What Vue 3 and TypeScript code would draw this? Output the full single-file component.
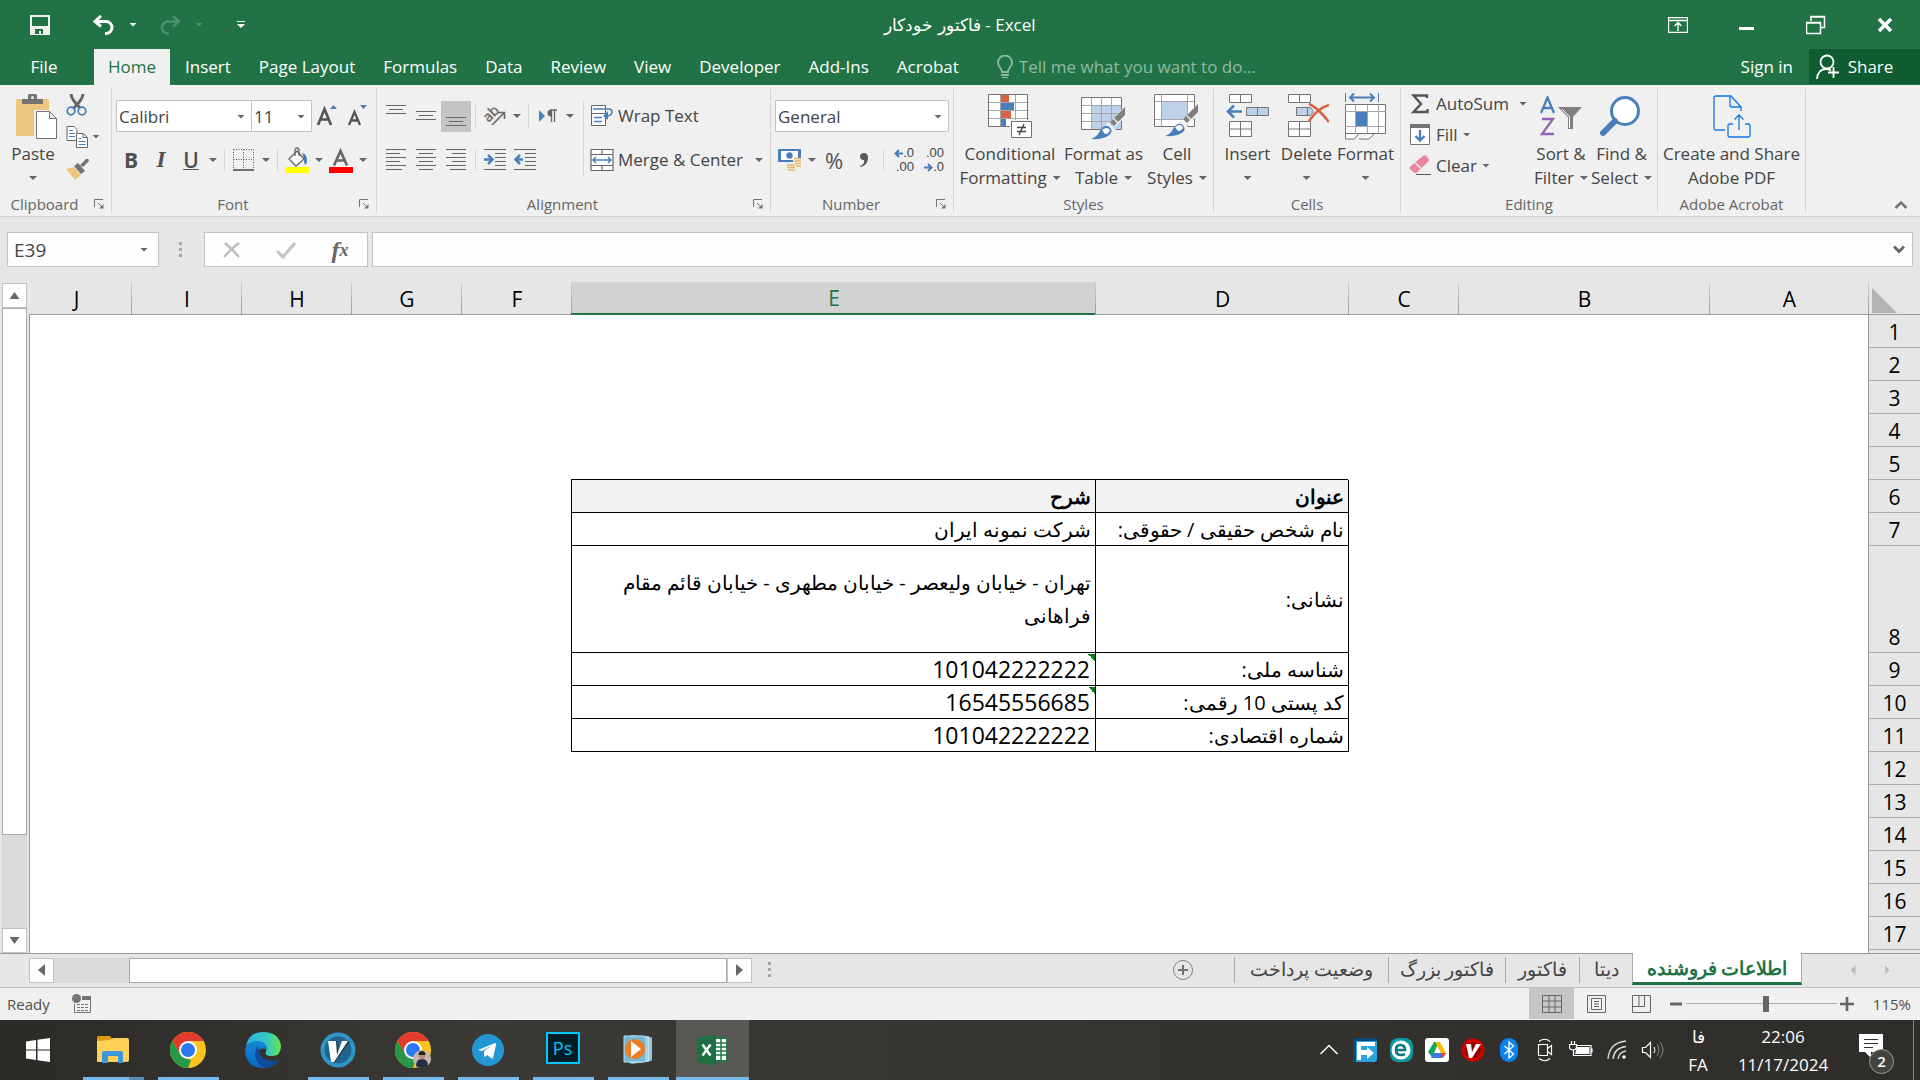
<script setup lang="ts">
import { ref } from 'vue'

interface Column { name: string; width?: number }
interface SheetRow { n: number; title?: string; value?: string; head?: boolean; tall?: boolean; flag?: boolean; numeric?: boolean }

const tabs = ['Insert', 'Page Layout', 'Formulas', 'Data', 'Review', 'View', 'Developer', 'Add-Ins', 'Acrobat']

const columns: Column[] = [
  { name: 'A', width: 159 }, { name: 'B', width: 251 }, { name: 'C', width: 110 },
  { name: 'D', width: 253 }, { name: 'E', width: 524 }, { name: 'F', width: 110 },
  { name: 'G', width: 110 }, { name: 'H', width: 110 }, { name: 'I', width: 110 }, { name: 'J' },
]

const filled: Record<number, Omit<SheetRow, 'n'>> = {
  6: { title: 'عنوان', value: 'شرح', head: true },
  7: { title: 'نام شخص حقیقی / حقوقی:', value: 'شرکت نمونه ایران' },
  8: { title: 'نشانی:', value: 'تهران - خیابان ولیعصر - خیابان مطهری - خیابان قائم مقام فراهانی', tall: true },
  9: { title: 'شناسه ملی:', value: '101042222222', flag: true, numeric: true },
  10: { title: 'کد پستی 10 رقمی:', value: '16545556685', flag: true, numeric: true },
  11: { title: 'شماره اقتصادی:', value: '101042222222', numeric: true },
}
const rows: SheetRow[] = Array.from({ length: 17 }, (_, i) => ({ n: i + 1, ...(filled[i + 1] ?? {}) }))

const sheets = ['دیتا', 'فاکتور', 'فاکتور بزرگ', 'وضعیت پرداخت']
const zoom = ref(53)
</script>

<template>
  <div class="window">
    <header class="titlebar">
      <div class="quick">
        <button aria-label="Save"><svg width="20" height="20" viewBox="0 0 20 20"><path d="M1 1h18v18H1z" fill="none" stroke="#f0f0f0" stroke-width="2"/><path d="M1 11h18v8H1z" fill="#f0f0f0"/><path d="M5 14h8v5h-2v-3H9v3H5z" fill="#217346"/></svg></button>
        <button class="undo" aria-label="Undo"><svg width="22" height="20" viewBox="0 0 22 20"><path d="M8 1L2 6.500l6 5M3 6.500h10a6 6 0 0 1 0 12h-1" fill="none" stroke="#fff" stroke-width="3"/></svg></button>
        <span class="caret white"></span>
        <button class="redo" aria-label="Redo"><svg width="22" height="20" viewBox="0 0 22 20"><path d="M14 1l6 5.500-6 5M19 6.500H9a6 6 0 0 0 0 12h1" fill="none" stroke="#4d9070" stroke-width="2.500"/></svg></button>
        <span class="caret dim"></span>
        <button class="customize" aria-label="Customize Quick Access Toolbar"><svg width="8" height="8" viewBox="0 0 8 8"><path d="M0 0h8v1H0zM0 3h8L4 7z" fill="#fff"/></svg></button>
      </div>
      <h1 class="doc">فاکتور خودکار - Excel</h1>
      <div class="winbtns">
        <button aria-label="Ribbon Display Options"><svg width="20" height="16" viewBox="0 0 20 16"><path d="M.5.5h19v15H.5zM.5 3.500h19M10 14V6M6.500 9L10 5.500 13.500 9" fill="none" stroke="#fff" stroke-width="1.300"/></svg></button>
        <button aria-label="Minimize"><svg width="16" height="16" viewBox="0 0 16 16"><path d="M0 10h15v3H0z" fill="#fff"/></svg></button>
        <button aria-label="Restore"><svg width="20" height="20" viewBox="0 0 20 20"><path d="M5 6V1.500h13.500v11H15M5 2h13.500M.5 7.500h14v11H.5zM.5 8h14" fill="none" stroke="#fff" stroke-width="1.500"/></svg></button>
        <button aria-label="Close"><svg width="16" height="16" viewBox="0 0 16 16"><path d="M2 2l12 12M14 2L2 14" stroke="#fff" stroke-width="3.500"/></svg></button>
      </div>
    </header>

    <nav class="tabs">
      <button class="tab file">File</button>
      <button class="tab active">Home</button>
      <button v-for="t in tabs" :key="t" class="tab">{{ t }}</button>
      <label class="tell">
        <svg width="16" height="24" viewBox="0 0 16 24"><path d="M5 17c0-4-4-5-4-9.500a7 7 0 0 1 14 0C15 12 11 13 11 17z" fill="none" stroke="#90b9a2" stroke-width="1.800"/><path d="M4 19h8v2H4zM5 22h6v1H5z" fill="#90b9a2"/></svg>
        <input type="text" placeholder="Tell me what you want to do..." />
      </label>
      <button class="tab signin">Sign in</button>
      <button class="share">
        <svg width="24" height="26" viewBox="0 0 24 26"><circle cx="11" cy="8" r="6.500" fill="none" stroke="#fff" stroke-width="1.800"/><path d="M1 25c0-6 4-10 9-10 2 0 4 .5 5 1.500M17.500 13v11M12 18.500h11" fill="none" stroke="#fff" stroke-width="1.800"/></svg>
        Share
      </button>
    </nav>

    <section class="ribbon">
      <div class="group g-clip">
        <div class="body">
          <button class="big paste">
            <span class="pic"><svg width="42" height="46" viewBox="0 0 42 46"><rect x="0" y="5" width="33" height="37" rx="1.500" fill="#ecc77d"/><path d="M6 10V5h6V1.500Q12 0 13.500 0h6Q21 0 21 1.500V5h6v5z" fill="#737373"/><circle cx="16.500" cy="3.500" r="1.500" fill="#f0f0f0"/><path d="M18 16h17l8 8v22H18z" fill="#f0f0f0"/><path d="M20.500 17.500h13l7 7v20h-20zM33.500 17.500v7h7" fill="#fff" stroke="#737373"/></svg></span>
            <span>Paste</span><span class="line2"><i class="caret"></i></span>
          </button>
          <div class="clipcol">
            <button class="sq" aria-label="Cut"><svg width="22" height="24" viewBox="0 0 22 24"><path d="M5 1q0 5 10 15M17 1q0 5-10 15" fill="none" stroke="#666" stroke-width="3"/><circle cx="5" cy="18" r="3.800" fill="#f0f0f0" stroke="#4a7ebb" stroke-width="1.800"/><circle cx="16" cy="18" r="3.800" fill="#f0f0f0" stroke="#4a7ebb" stroke-width="1.800"/></svg></button>
            <span class="pair"><button class="sq" aria-label="Copy"><svg width="22" height="24" viewBox="0 0 22 24"><path d="M1 1.500h7l3 3v11H1z" fill="#fff" stroke="#666"/><path d="M3 5.500h4M3 8.500h6M3 11.500h6" stroke="#4a7ebb"/><path d="M10.500 8.500h7l4 4v10h-11zM17 8.500v4h4" fill="#fff" stroke="#666"/><path d="M12.500 13.500h3M12.500 16.500h7M12.500 19.500h7" stroke="#4a7ebb"/></svg></button><i class="caret"></i></span>
            <button class="sq" aria-label="Format Painter"><svg width="24" height="22" viewBox="0 0 24 22"><path d="M1 11l8-2 7 8-6 5z" fill="#ecc77d"/><path d="M9 8l4-3 7 8-4 3z" fill="#737373"/><path d="M15 7l5-5q2-2 3-1 2 1 0 3l-5 5z" fill="#737373"/></svg></button>
          </div>
        </div>
        <footer><span class="name">Clipboard</span><svg class="launch" width="10" height="10" viewBox="0 0 10 10"><path d="M.5 8V.5H9M4 4l4 4" fill="none" stroke="#737373"/><path d="M9.500 5v4.500H5z" fill="#737373"/></svg></footer>
      </div>
      <i class="divider"></i>

      <div class="group g-font">
        <div class="body rows">
          <div class="row combos">
            <label class="combo face"><select aria-label="Font"><option>Calibri</option></select><i class="caret"></i></label>
            <label class="combo size"><select aria-label="Font size"><option>11</option></select><i class="caret"></i></label>
            <button class="sq" aria-label="Increase Font Size"><svg width="22" height="22" viewBox="0 0 22 22"><path d="M2 20L8.500 4 15 20M4.500 14.500h8" fill="none" stroke="#555" stroke-width="2.600"/><path d="M14 4l3.500-4L21 4z" fill="#4a7ebb"/></svg></button>
            <button class="sq" aria-label="Decrease Font Size"><svg width="22" height="22" viewBox="0 0 22 22"><path d="M3 20L8.500 7 14 20M5 15.500h7" fill="none" stroke="#555" stroke-width="2.300"/><path d="M14 0h7l-3.500 4z" fill="#4a7ebb"/></svg></button>
          </div>
          <div class="row">
            <button class="sq ch bold">B</button><button class="sq ch ital">I</button><button class="sq ch under">U</button><i class="caret w"></i>
            <i class="sep"></i>
            <button class="sq" aria-label="Borders"><svg width="22" height="22" viewBox="0 0 22 22"><path d="M.5.5v20M20.500.5v20M.5.5h20M10.500.5v20M.5 10.500h20" fill="none" stroke="#555" stroke-dasharray="1 1.500"/><path d="M0 21h21" stroke="#444" stroke-width="1.500"/></svg></button><i class="caret w"></i>
            <i class="sep"></i>
            <button class="sq" aria-label="Fill Color"><svg width="24" height="26" viewBox="0 0 24 26"><path d="M0 20h24v6H0z" fill="#ff0"/><path d="M4 12l8-8 7 8-8 7z" fill="#fff" stroke="#666" stroke-width="1.300"/><path d="M10 9V4q0-3 2-3t2 3v5" fill="none" stroke="#666" stroke-width="1.300"/><path d="M17 6q5 1 5 7 0 3-1.500 5-2-2-1.500-7z" fill="#4a7ebb"/></svg></button><i class="caret w"></i>
            <button class="sq" aria-label="Font Color"><svg width="24" height="26" viewBox="0 0 24 26"><path d="M0 20h24v6H0z" fill="red"/><path d="M5 18.500L11.500 4 18 18.500M7.500 13.500h8" fill="none" stroke="#666" stroke-width="2.600"/></svg></button><i class="caret w"></i>
          </div>
        </div>
        <footer><span class="name">Font</span><svg class="launch" width="10" height="10" viewBox="0 0 10 10"><path d="M.5 8V.5H9M4 4l4 4" fill="none" stroke="#737373"/><path d="M9.500 5v4.500H5z" fill="#737373"/></svg></footer>
      </div>
      <i class="divider"></i>

      <div class="group g-align">
        <div class="body">
          <div class="rows">
            <div class="row">
              <button class="sq" aria-label="Top Align"><svg width="20" height="22" viewBox="0 0 20 22"><path d="M0 .5h20M3 4.500h14M0 8.500h20" stroke="#666"/></svg></button>
              <button class="sq" aria-label="Middle Align"><svg width="20" height="22" viewBox="0 0 20 22"><path d="M0 6.500h20M3 10.500h14M0 14.500h20" stroke="#666"/></svg></button>
              <button class="sq on" aria-label="Bottom Align"><svg width="20" height="22" viewBox="0 0 20 22"><path d="M0 12.500h20M3 16.500h14M0 20.500h20" stroke="#666"/></svg></button>
              <i class="sep"></i>
              <button class="sq" aria-label="Orientation"><svg class="loose" width="22" height="22" viewBox="0 0 22 22"><text x="0" y="13" transform="rotate(-45 8 10)" font-size="14" fill="#666" stroke="#666" stroke-width=".4">ab</text><path d="M8 20L20 8M14 7.500h6.500V14" fill="none" stroke="#666" stroke-width="1.600"/></svg></button><i class="caret w"></i>
              <i class="sep"></i>
              <button class="sq" aria-label="Text Direction"><svg width="20" height="16" viewBox="0 0 20 16"><path d="M1 2l6 6-6 6z" fill="#4a7ebb"/><path d="M13.500 2v12M16.500 2v12M12 2h7" stroke="#666" stroke-width="1.300"/><path d="M13 1.500a3.500 3.500 0 0 0 0 7z" fill="#666"/></svg></button><i class="caret w"></i>
            </div>
            <div class="row">
              <button class="sq" aria-label="Align Left"><svg width="20" height="22" viewBox="0 0 20 22"><path d="M0 .5h20M0 4.500h14M0 8.500h20M0 12.500h14M0 16.500h20M0 20.500h16" stroke="#666"/></svg></button>
              <button class="sq" aria-label="Center"><svg width="20" height="22" viewBox="0 0 20 22"><path d="M0 .5h20M3 4.500h14M0 8.500h20M3 12.500h14M0 16.500h20M3 20.500h14" stroke="#666"/></svg></button>
              <button class="sq" aria-label="Align Right"><svg width="20" height="22" viewBox="0 0 20 22"><path d="M0 .5h20M6 4.500h14M0 8.500h20M6 12.500h14M0 16.500h20M4 20.500h16" stroke="#666"/></svg></button>
              <i class="sep"></i>
              <button class="sq" aria-label="Increase Indent"><svg width="22" height="22" viewBox="0 0 22 22"><path d="M0 .5h22M11 4.500h11M11 8.500h11M11 12.500h11M11 16.500h11M0 20.500h22" stroke="#666"/><path d="M0 10.500h8M4 6l4.500 4.500L4 15" fill="none" stroke="#4a7ebb" stroke-width="2.500"/></svg></button>
              <button class="sq" aria-label="Decrease Indent"><svg width="22" height="22" viewBox="0 0 22 22"><path d="M0 .5h22M11 4.500h11M11 8.500h11M11 12.500h11M11 16.500h11M0 20.500h22" stroke="#666"/><path d="M9 10.500H2M6 6l-4.500 4.500L6 15" fill="none" stroke="#4a7ebb" stroke-width="2.500"/></svg></button>
            </div>
          </div>
          <i class="sep tallsep"></i>
          <div class="rows">
            <button class="row wide"><svg width="24" height="24" viewBox="0 0 24 24"><path d="M1.500 1.500h14v20h-14zM1.500 9.500h14" fill="#fff" stroke="#666"/><path d="M3 5h16q3 0 3 3t-4 4h-3M4 13.500h8M4 17.500h8" fill="none" stroke="#4a7ebb" stroke-width="1.500"/><path d="M18 7l-5 5 5 4z" fill="#4a7ebb"/></svg>Wrap Text</button>
            <button class="row wide"><svg width="24" height="24" viewBox="0 0 24 24"><path d="M1 1.500h22v21H1zM1 6.500h22M1 17.500h22M12 1.500v5M12 17.500v5" fill="#fff" stroke="#666" stroke-width="1.200"/><path d="M3 12h18M6 9l-3 3 3 3M18 9l3 3-3 3" fill="none" stroke="#4a7ebb" stroke-width="1.500"/></svg>Merge &amp; Center<i class="caret far"></i></button>
          </div>
        </div>
        <footer><span class="name">Alignment</span><svg class="launch" width="10" height="10" viewBox="0 0 10 10"><path d="M.5 8V.5H9M4 4l4 4" fill="none" stroke="#737373"/><path d="M9.500 5v4.500H5z" fill="#737373"/></svg></footer>
      </div>
      <i class="divider"></i>

      <div class="group g-num">
        <div class="body rows">
          <div class="row"><label class="combo fmt"><select aria-label="Number Format"><option>General</option></select><i class="caret"></i></label></div>
          <div class="row">
            <button class="sq" aria-label="Accounting Number Format"><svg width="24" height="24" viewBox="0 0 24 24"><rect x="0" y="1" width="23" height="13" rx="1" fill="#4a7ebb"/><path d="M3 3h17v9H3z" fill="#fff"/><circle cx="11.500" cy="7.500" r="3.200" fill="#4a7ebb"/><path d="M15 10h8v9h-5v4H8v-6h7z" fill="#f0f0f0"/><path d="M16 10.500h7M16 13h7M17 15.500h6M18 18h5M9 17h8M9 19.500h8M10 22h7" stroke="#e5b566" stroke-width="1.600"/></svg></button><i class="caret w"></i>
            <button class="sq ch pct">%</button>
            <button class="sq" aria-label="Comma Style"><svg width="12" height="16" viewBox="0 0 12 16"><path d="M2 14q5-2 4-6-4 0-4-3.500T6 1q4 0 4 5 0 7-7.500 9z" fill="#595959"/></svg></button>
            <i class="sep"></i>
            <button class="sq dec" aria-label="Increase Decimal"><span><svg width="9" height="9" viewBox="0 0 9 9"><path d="M9 4.500H1.500M5 1L1.500 4.500 5 8" fill="none" stroke="#4a7ebb" stroke-width="2"/></svg>.0</span><span>.00</span></button>
            <button class="sq dec" aria-label="Decrease Decimal"><span>.00</span><span><svg width="9" height="9" viewBox="0 0 9 9"><path d="M0 4.500h7.500M4 1l3.500 3.500L4 8" fill="none" stroke="#4a7ebb" stroke-width="2"/></svg>.0</span></button>
          </div>
        </div>
        <footer><span class="name">Number</span><svg class="launch" width="10" height="10" viewBox="0 0 10 10"><path d="M.5 8V.5H9M4 4l4 4" fill="none" stroke="#737373"/><path d="M9.500 5v4.500H5z" fill="#737373"/></svg></footer>
      </div>
      <i class="divider"></i>

      <div class="group g-styles">
        <div class="body">
          <button class="big cond"><span class="pic"><svg width="44" height="46" viewBox="0 0 44 46"><path d="M.5.5h39v32H.5z" fill="#fff"/><path d="M.5 8.500h39M.5 16.500h39M.5 24.500h39M12.500.5v32M27.500.5v32" stroke="#a6a6a6"/><path d="M.5.5h39v32H.5z" fill="none" stroke="#737373"/><path d="M13 1h8v7h-8zM13 17h10v7H13z" fill="#d86344"/><path d="M13 9h13v7H13zM13 25h5v7h-5z" fill="#4a7ebb"/><path d="M22 26h22v20H22z" fill="#f0f0f0"/><path d="M23.500 27.500h20v16h-20z" fill="#fff" stroke="#737373"/><path d="M29 33.500h9M29 37.500h9M36 30l-5 11" stroke="#444" stroke-width="1.300"/></svg></span><span>Conditional</span><span class="line2">Formatting<i class="caret"></i></span></button>
          <button class="big fmtas"><span class="pic"><svg width="46" height="46" viewBox="0 0 46 46"><path d="M.5 3.500h40v32H.5z" fill="#fff"/><path d="M11 12h29v24H11z" fill="#bdd1e8"/><path d="M.5 11.500h40M.5 19.500h40M.5 27.500h40M10.500 3.500v32M20.500 3.500v32M30.500 3.500v32" stroke="#a6a6a6"/><path d="M.5 3.500h40v32H.5z" fill="none" stroke="#737373"/><path d="M44 12v11L34 33l-5-5zM20 38l7-10 8 8-7 8z" fill="#f0f0f0"/><path d="M44 13v8l-7 7-4-4zM32 25l4 4-3 3-4-4z" fill="#808080"/><path d="M10 45q6-2 9-8 3-6 8-5 5 3 3 7-5 7-20 6z" fill="#4a7ebb"/><path d="M21 36q5-4 8 0-1 4-5 4z" fill="#fff"/></svg></span><span>Format as</span><span class="line2">Table<i class="caret"></i></span></button>
          <button class="big cell"><span class="pic"><svg width="46" height="46" viewBox="0 0 46 46"><path d="M.5.5h40v32H.5z" fill="#fff"/><path d="M.5 7.500h40M.5 25.500h40M7.500.5v32M33.500.5v32" stroke="#a6a6a6"/><path d="M8 8h25v17H8z" fill="#bdd1e8"/><path d="M.5.5h40v32H.5z" fill="none" stroke="#737373"/><path d="M44 10v11L34 31l-5-5zM20 36l7-10 8 8-7 8z" fill="#f0f0f0"/><path d="M44 10v8l-7 7-4-4zM32 22l4 4-3 3-4-4z" fill="#808080"/><path d="M11 42q6-2 8-7 3-6 8-5 5 3 3 7-5 6-19 5z" fill="#4a7ebb"/><path d="M21 33q5-4 8 0-1 4-5 4z" fill="#fff"/></svg></span><span>Cell</span><span class="line2">Styles<i class="caret"></i></span></button>
        </div>
        <footer><span class="name">Styles</span></footer>
      </div>
      <i class="divider"></i>

      <div class="group g-cells">
        <div class="body">
          <button class="big cel"><span class="pic"><svg width="44" height="46" viewBox="0 0 44 46"><path d="M3.500.5h22v8h-22zM14.500.5v8M3.500 27.500h22v15h-22zM14.500 27.500v15M3.500 35h22" fill="#fff" stroke="#737373"/><path d="M20.500 13.500h22v8h-22zM31.500 13.500v8" fill="#bdd1e8" stroke="#737373"/><path d="M16 17.500H2M8 11.500l-6 6 6 6" fill="none" stroke="#4a7ebb" stroke-width="2.500"/></svg></span><span>Insert</span><span class="line2"><i class="caret"></i></span></button>
          <button class="big cel"><span class="pic"><svg width="44" height="46" viewBox="0 0 44 46"><path d="M3.500.5h22v8h-22zM14.500.5v8M3.500 27.500h22v15h-22zM14.500 27.500v15M3.500 35h22" fill="#fff" stroke="#737373"/><path d="M11.500 13.500h14l3 4-3 4h-14zM22.500 13.500v8" fill="#bdd1e8" stroke="#737373"/><path d="M24 10q8 3 20 18M44 11Q33 14 24 27" fill="none" stroke="#d86344" stroke-width="2.600"/></svg></span><span>Delete</span><span class="line2"><i class="caret"></i></span></button>
          <button class="big cel"><span class="pic"><svg width="44" height="48" viewBox="0 0 44 48"><path d="M1.500 0v9M34.500 0v9" stroke="#4a7ebb"/><path d="M6 4.500h24M10 .5l-4 4 4 4M26 .5l4 4-4 4" fill="none" stroke="#4a7ebb" stroke-width="2"/><path d="M1.500 11.500h40v29h-40zM1.500 41v5h9l4-5M15 46h10l5-5" fill="#fff" stroke="#737373"/><path d="M1.500 18.500h40M1.500 33.500h40M11.500 11.500v29M23.500 11.500v29M34.500 11.500v29" stroke="#a6a6a6"/><path d="M12 19h11v14H12z" fill="#4a7ebb"/></svg></span><span>Format</span><span class="line2"><i class="caret"></i></span></button>
        </div>
        <footer><span class="name">Cells</span></footer>
      </div>
      <i class="divider"></i>

      <div class="group g-edit">
        <div class="body">
          <div class="editcol">
            <button class="mini"><svg width="22" height="22" viewBox="0 0 22 22"><path d="M18 5V2.500H4.500L12 11l-7.500 8H18.500V16" fill="none" stroke="#555" stroke-width="2.400"/></svg>AutoSum<i class="caret push"></i></button>
            <button class="mini"><svg width="22" height="22" viewBox="0 0 22 22"><path d="M1.500 1.500h19v19h-19z" fill="#fff" stroke="#737373"/><path d="M1 0h20v4H1z" fill="#737373"/><path d="M11 6v11M6.500 12l4.500 4.500 4.500-4.500" fill="none" stroke="#4a7ebb" stroke-width="2.300"/></svg>Fill<i class="caret"></i></button>
            <button class="mini"><svg width="22" height="22" viewBox="0 0 22 22"><path d="M14 1q2-1.500 3.500 0l2 3q1 1.500-.5 3l-6.500 6-6-6z" fill="#e8879b"/><path d="M5.500 8l6 6-4 4H5.500L1 14q-1-1 0-2z" fill="#e8879b"/><path d="M7 19.500h15" stroke="#555"/></svg>Clear<i class="caret"></i></button>
          </div>
          <button class="big sort"><span class="pic"><svg width="44" height="42" viewBox="0 0 44 42"><path d="M2 17L8.500 1.500 15 17M4.500 12h8" fill="none" stroke="#4a7ebb" stroke-width="2.300"/><path d="M3 23h11L3 38h12" fill="none" stroke="#9463b5" stroke-width="2.300"/><path d="M19 11h24l-9 10v12h-5V21z" fill="#808080"/><path d="M23 13l7.500 7.500V32" fill="none" stroke="#fff"/></svg></span><span>Sort &amp;</span><span class="line2">Filter<i class="caret"></i></span></button>
          <button class="big find"><span class="pic"><svg width="46" height="44" viewBox="0 0 46 44"><circle cx="26" cy="16" r="13.500" fill="#fff" stroke="#4a7ebb" stroke-width="3"/><path d="M16 26L4 38" stroke="#4a7ebb" stroke-width="6" stroke-linecap="round"/></svg></span><span>Find &amp;</span><span class="line2">Select<i class="caret"></i></span></button>
        </div>
        <footer><span class="name">Editing</span></footer>
      </div>
      <i class="divider"></i>

      <div class="group g-acro">
        <div class="body">
          <button class="big adobe"><span class="pic"><svg width="38" height="44" viewBox="0 0 38 44"><path d="M12 35H3q-2 0-2-2V3q0-2 2-2h15l10 11v4M17 1v9q0 2 2 2h9" fill="none" stroke="#1473e6" stroke-width="1.300"/><path d="M20 29h-3q-2 0-2 2v9q0 2 2 2h18q2 0 2-2v-9q0-2-2-2h-3M26 35V20M21.500 24.500L26 20l4.500 4.500" fill="none" stroke="#1473e6" stroke-width="1.300"/></svg></span><span>Create and Share</span><span class="line2">Adobe PDF</span></button>
        </div>
        <footer><span class="name">Adobe Acrobat</span></footer>
      </div>
      <i class="divider"></i>
      <button class="collapse" aria-label="Collapse the Ribbon"><svg width="14" height="10" viewBox="0 0 14 10"><path d="M1.500 8L7 2.500 12.500 8" fill="none" stroke="#737373" stroke-width="2.500"/></svg></button>
    </section>

    <section class="formula">
      <label class="namebox"><input type="text" value="E39" aria-label="Name Box" /><i class="caret"></i></label>
      <svg class="dots" width="4" height="16" viewBox="0 0 4 16"><path d="M0 0h3v3H0zM0 6h3v3H0zM0 12h3v3H0z" fill="#a6a6a6"/></svg>
      <div class="fxbox">
        <button aria-label="Cancel"><svg width="18" height="18" viewBox="0 0 18 18"><path d="M2 2q6 5 14 14M16 2Q9 7 1 16" fill="none" stroke="#bdbdbd" stroke-width="2.300"/></svg></button>
        <button aria-label="Enter"><svg width="20" height="18" viewBox="0 0 20 18"><path d="M1 10l6 6L19 2" fill="none" stroke="#c4c4c4" stroke-width="3"/></svg></button>
        <button class="fx" aria-label="Insert Function">f<small>x</small></button>
      </div>
      <label class="finput"><input type="text" aria-label="Formula Bar" /><svg width="12" height="9" viewBox="0 0 12 9"><path d="M1 1.500l5 5 5-5" fill="none" stroke="#666" stroke-width="2.800"/></svg></label>
    </section>

    <main class="work">
      <div class="vscroll">
        <button aria-label="Scroll up"><i class="arrow up"></i></button>
        <div class="vthumb"></div>
        <div class="vtrack"></div>
        <button aria-label="Scroll down"><i class="arrow down"></i></button>
      </div>
      <div class="gridwrap">
        <table class="grid" dir="rtl">
          <colgroup>
            <col style="width: 52px" />
            <col v-for="c in columns" :key="c.name" :style="c.width ? { width: c.width + 'px' } : {}" />
          </colgroup>
          <thead>
            <tr>
              <th class="corner"><svg width="25" height="25" viewBox="0 0 25 25"><path d="M0 0l25 25H0z" fill="#b3b3b3"/></svg></th>
              <th v-for="c in columns" :key="c.name" :class="{ sel: c.name === 'E' }">{{ c.name }}</th>
            </tr>
          </thead>
          <tbody>
            <tr v-for="r in rows" :key="r.n" :class="{ tall: r.tall, head: r.head, above: r.n === 5 }">
              <th class="rh">{{ r.n }}</th>
              <td></td><td></td><td class="cc" :class="{ edge: r.title }"></td>
              <td :class="{ box: r.title }">{{ r.title }}</td>
              <td :class="{ box: r.title, num: r.numeric }"><div v-if="r.value" class="val" :class="{ flag: r.flag }">{{ r.value }}</div></td>
              <td></td><td></td><td></td><td></td><td></td>
            </tr>
            <tr class="last"><th class="rh"></th><td colspan="10"></td></tr>
          </tbody>
        </table>
      </div>
    </main>

    <section class="sheetbar">
      <div class="hscroll">
        <button aria-label="Scroll left"><i class="arrow left"></i></button>
        <div class="htrack"></div>
        <div class="hthumb"></div>
        <button aria-label="Scroll right"><i class="arrow right"></i></button>
      </div>
      <svg class="dots" width="4" height="16" viewBox="0 0 4 16"><path d="M0 0h3v3H0zM0 6h3v3H0zM0 12h3v3H0z" fill="#a6a6a6"/></svg>
      <div class="sheets" dir="rtl">
        <button class="nav" aria-label="Next sheet"><i class="arrow right pale"></i></button>
        <button class="nav" aria-label="Previous sheet"><i class="arrow left pale"></i></button>
        <button class="sheet current">اطلاعات فروشنده</button>
        <button v-for="(s, i) in sheets" :key="s" class="sheet" :class="'s' + i">{{ s }}</button>
        <button class="add" aria-label="New sheet"><svg width="22" height="22" viewBox="0 0 22 22"><circle cx="11" cy="11" r="9.500" fill="none" stroke="#808080"/><path d="M11 6v10M6 11h10" stroke="#737373" stroke-width="2"/></svg></button>
      </div>
    </section>

    <footer class="status">
      <span>Ready</span>
      <svg class="macro" width="20" height="20" viewBox="0 0 20 20"><path d="M2.500 10v8.500h16V5" fill="none" stroke="#737373"/><path d="M10 2h9v4h-9z" fill="#737373"/><circle cx="4.500" cy="4.500" r="4.500" fill="#737373"/><path d="M5 10.500h11M5 13.500h11M5 16.500h11" stroke="#737373" stroke-dasharray="3 1"/></svg>
      <div class="views">
        <button class="on" aria-label="Normal"><svg width="20" height="20" viewBox="0 0 20 20"><path d="M.5 1.500h19v17H.5zM.5 7h19M.5 13h19M7 1.500v17M13 1.500v17" fill="none" stroke="#666"/></svg></button>
        <button aria-label="Page Layout"><svg width="20" height="20" viewBox="0 0 20 20"><path d="M.5 1.500h18v17H.5zM4.500 4.500h10v11h-10zM7 7.500h5M7 10h5M7 12.500h5" fill="none" stroke="#666"/></svg></button>
        <button aria-label="Page Break Preview"><svg width="20" height="20" viewBox="0 0 20 20"><path d="M.5 1.500h18v17H.5zM.5 12.500h12v-11M7 1.500v11" fill="none" stroke="#666"/></svg></button>
      </div>
      <button class="zb" aria-label="Zoom out"><svg width="12" height="12" viewBox="0 0 12 12"><path d="M0 4.500h12v3H0z" fill="#666"/></svg></button>
      <input v-model="zoom" class="zoom" type="range" min="0" max="100" aria-label="Zoom" />
      <button class="zb" aria-label="Zoom in"><svg width="14" height="14" viewBox="0 0 14 14"><path d="M0 7h14M7 0v14" stroke="#666" stroke-width="2.600"/></svg></button>
      <span class="pc">115%</span>
    </footer>

    <footer class="taskbar">
      <button class="app" aria-label="Start"><svg width="24" height="24" viewBox="0 0 24 24"><path d="M0 3.500L10 2v9.500H0zM11.500 1.800L24 0v11.500H11.500zM0 12.500h10V22L0 20.500zM11.500 12.500H24V24l-12.500-1.800z" fill="#fff"/></svg></button>
      <button class="app open multi" aria-label="File Explorer"><svg width="32" height="28" viewBox="0 0 32 28"><path d="M0 2q0-2 2-2h11l2 3v5H0z" fill="#e09b0b"/><path d="M0 5l13-1 3-2h14q2 0 2 2v20q0 2-2 2H0z" fill="#ffd257"/><path d="M5 27V17q0-2 2-2h17q2 0 2 2v10h-5v-7H11v7z" fill="#3b96dd"/></svg></button>
      <button class="app open" aria-label="Chrome"><svg width="36" height="36" viewBox="0 0 36 36"><circle cx="18" cy="18" r="18" fill="#fcc31e"/><path d="M2.400 9A18 18 0 0 1 33.600 9H18L10.200 22.500z" fill="#e33b2e"/><path d="M2.400 9l7.800 13.500L18 27l3 1-3 8A18 18 0 0 1 2.400 9z" fill="#279847"/><circle cx="18" cy="18" r="9" fill="#fff"/><circle cx="18" cy="18" r="7" fill="#2c78ee"/></svg></button>
      <button class="app" aria-label="Edge"><svg width="36" height="36" viewBox="0 0 36 36"><defs><linearGradient id="edgeTop"><stop offset="0" stop-color="#2fb2ee"/><stop offset=".6" stop-color="#35c8c0"/><stop offset="1" stop-color="#6ae64e"/></linearGradient><linearGradient id="edgeLow" x2="0" y2="1"><stop offset="0" stop-color="#1687d2"/><stop offset="1" stop-color="#0867c6"/></linearGradient></defs><path d="M1 14Q4 0 18 0q16 0 18 14 0 10-9 10-8 0-6-4 2-8-6-10Q6 9 1 14z" fill="url(#edgeTop)"/><path d="M0 18Q2 9 12 9q9 0 10 8-10-2-9 6 2 8 12 8 5 0 8-3Q28 36 18 36 1 36 0 18z" fill="url(#edgeLow)"/><path d="M13 14q-5 5-2 13 4 9 11 9 8-2 12-8-5 2-11 0-9-2-10-14z" fill="#114a9b"/></svg></button>
      <button class="app open" aria-label="V"><svg width="36" height="36" viewBox="0 0 36 36"><circle cx="18" cy="18" r="17.500" fill="#2f94c8"/><circle cx="18" cy="18" r="13.500" fill="#22648a"/><path d="M8 9h9l1 12L23 9h7L14 31z" fill="#153346"/><path d="M8 9h8l1 14 5-14h6L14 30h-3z" fill="#fff"/></svg></button>
      <button class="app open" aria-label="Chrome profile"><svg width="36" height="36" viewBox="0 0 36 36"><circle cx="18" cy="18" r="18" fill="#fcc31e"/><path d="M2.400 9A18 18 0 0 1 33.600 9H18L10.200 22.500z" fill="#e33b2e"/><path d="M2.400 9l7.800 13.500L18 27l3 1-3 8A18 18 0 0 1 2.400 9z" fill="#279847"/><circle cx="18" cy="18" r="9" fill="#fff"/><circle cx="18" cy="18" r="7" fill="#2c78ee"/><circle cx="27" cy="27" r="9" fill="#c2b8ad"/><path d="M21 34q0-7 6-7t6 7q-6 4-12 0z" fill="#252c48"/><circle cx="27" cy="24" r="3.200" fill="#bd8e74"/><path d="M23.500 23q0-4 3.500-4t3.500 4z" fill="#222"/></svg></button>
      <button class="app open" aria-label="Telegram"><svg width="32" height="32" viewBox="0 0 32 32"><circle cx="16" cy="16" r="16" fill="#2397d4"/><path d="M6 16l17-7q1 0 1 2l-3 13q-.5 1-2 0l-4-3-2 2q-1 0-1-2v-4l8-6-10 6z" fill="#fff"/></svg></button>
      <button class="app open" aria-label="Photoshop"><span class="ps">Ps</span></button>
      <button class="app open" aria-label="Media Player"><svg width="32" height="30" viewBox="0 0 32 30"><path d="M10 0l20 2v24l-20 3z" fill="#5a9ec0"/><path d="M8 1l19 1v24L8 28zM29 3v22" fill="#a5d2e5" stroke="#dceef6"/><path d="M2 1h20q2 0 2 2v22q0 2-2 2H2z" fill="#74b8d8" stroke="#b7dcea"/><circle cx="13" cy="14" r="10" fill="#ef7a20"/><path d="M9 6l10 8-10 8z" fill="#fff"/></svg></button>
      <button class="app open active" aria-label="Excel"><svg width="32" height="32" viewBox="0 0 32 32"><path d="M17 3h14v25H17z" fill="#1e7a45"/><path d="M19 5h10v21H19z" fill="#fff"/><path d="M18 9h12M18 13h12M18 17h12M18 21h12M24 4v23" stroke="#1e7a45" stroke-width="1.500"/><path d="M0 4l19-4v32L0 28z" fill="#1d7044"/><path d="M5.500 10.500l8 11M13.500 10.500l-8 11" stroke="#fff" stroke-width="2.400"/></svg></button>

      <div class="tray">
        <button aria-label="Show hidden icons"><svg width="18" height="12" viewBox="0 0 18 12"><path d="M.5 10L9 1.500l8.500 8.500" fill="none" stroke="#fff" stroke-width="1.500"/></svg></button>
        <button aria-label="Transfer"><svg width="24" height="24" viewBox="0 0 24 24"><path d="M0 3q0-3 3-3h21v3H3v21H0z" fill="#0b4a78"/><path d="M3 3h21v18q0 3-3 3H3z" fill="#2aa4dc"/><path d="M4 4h18v4H8v4h6V9l7 6-7 6v-4H8v5H4z" fill="#fff"/></svg></button>
        <button aria-label="Antivirus"><svg width="24" height="24" viewBox="0 0 24 24"><rect x="1" y="0" width="23" height="24" rx="8" fill="#0e98a0"/><circle cx="12" cy="12" r="9.500" fill="#fff"/><path d="M7 12h9q0-5-4.500-5T7 12q0 5 5 5 2.500 0 4-1" fill="none" stroke="#077983" stroke-width="2.600"/></svg></button>
        <button aria-label="Drive"><svg width="24" height="24" viewBox="0 0 24 24"><rect width="24" height="24" rx="3" fill="#fff"/><path d="M9 4h5l-7 15-4-5z" fill="#11a75b"/><path d="M10 4h5l6 11h-5z" fill="#fbbc05"/><path d="M8 15h13l-4 5H6z" fill="#3c78e8"/><path d="M16 15h5l-3 5z" fill="#e8453a"/></svg></button>
        <button aria-label="V monitor"><svg width="24" height="24" viewBox="0 0 24 24"><circle cx="12" cy="12" r="11.500" fill="#d40000"/><circle cx="12" cy="12" r="8" fill="#8c0000"/><path d="M5 6h5l1 8 4-8h5l-9 14H8z" fill="#fff"/></svg></button>
        <button aria-label="Bluetooth"><svg width="18" height="24" viewBox="0 0 18 24"><rect width="18" height="24" rx="9" fill="#0a84f5"/><path d="M4.500 8l9 8L9 20V4l4.500 4-9 8" fill="none" stroke="#fff" stroke-width="1.400"/></svg></button>
        <button aria-label="Meet Now"><svg width="20" height="24" viewBox="0 0 20 24"><path d="M3.500 6.500h9v11h-9zM12.500 10.500l4-3v9l-4-3M4 3.500Q10-1 15 3.500M4 20.500q6 4.500 11 0" fill="none" stroke="#fff" stroke-width="1.200"/></svg></button>
        <button aria-label="Battery"><svg width="24" height="18" viewBox="0 0 24 18"><path d="M7 4.500h15v10H4.500V9M23 7.500v4" fill="none" stroke="#fff" stroke-width="1.200"/><path d="M8 6h12.500v7H6z" fill="#fff"/><path d="M.5 3.500h7v3q0 2-3.500 2.500Q.5 8.500.5 6.500zM2.500 0v3M5.500 0v3" fill="#33312d" stroke="#fff" stroke-width="1.200"/></svg></button>
        <button aria-label="Network"><svg width="20" height="20" viewBox="0 0 20 20"><path d="M1 19Q2 3 19 1M6 19Q7 8 19 6.500M11 19q1-7 8-8" fill="none" stroke="#ddd" stroke-width="1.300"/><circle cx="17" cy="17" r="1.800" fill="#fff"/></svg></button>
        <button aria-label="Volume"><svg width="24" height="20" viewBox="0 0 24 20"><path d="M1.500 7.500h3l5-5v15l-5-5h-3z" fill="none" stroke="#fff" stroke-width="1.200"/><path d="M13 7q2 3 0 6" fill="none" stroke="#fff"/><path d="M16 4.500q4 5.500 0 11M19 2q6 8 0 16" fill="none" stroke="#888"/></svg></button>
      </div>
      <button class="lang"><span>فا</span><span>FA</span></button>
      <button class="clock"><span>22:06</span><span>11/17/2024</span></button>
      <button class="notes" aria-label="Notifications"><svg width="24" height="24" viewBox="0 0 24 24"><path d="M0 0h24v18H12v6l-6-6H0z" fill="#fff"/><path d="M5 5.500h14M5 9.500h14M5 13.500h9" stroke="#33312d"/></svg><span class="badge">2</span></button>
      <i class="peek"></i>
    </footer>
  </div>
</template>

<style>
body { margin: 0; background: #e6e6e6; }
</style>

<style scoped>
.window { display: flex; flex-direction: column; min-height: 100vh; font-family: "Open Sans", "Noto Sans", sans-serif; font-size: 17px; line-height: 24px; color: #444; background: #e6e6e6; overflow: hidden; }
.window * { box-sizing: border-box; }
button { font: inherit; color: inherit; background: none; border: 0; padding: 0; margin: 0; display: flex; align-items: center; justify-content: center; flex: none; white-space: nowrap; }
input, select { font: inherit; color: inherit; background: none; border: 0; padding: 0; margin: 0; outline: 0; appearance: none; min-width: 0; }
svg { flex: none; display: block; }
.loose { overflow: visible; }
.caret { flex: none; width: 8px; height: 4px; background: #666; clip-path: polygon(0 0, 100% 0, 50% 100%); }
.caret.w { margin: 0 3px; }
.caret.white { background: #fff; }
.caret.dim { background: #4d9070; }

.titlebar { display: grid; grid-template-columns: 1fr auto 1fr; align-items: center; height: 49px; background: #217346; color: #fff; }
.quick { display: flex; align-items: center; padding-left: 30px; }
.quick .undo { margin: 0 14px 0 43px; }
.quick .redo { margin: 0 14px 0 22px; }
.quick .customize { margin-left: 34px; }
.doc { margin: 0; font-size: 17px; font-weight: 400; }
.winbtns { display: flex; justify-content: flex-end; padding-right: 1px; }
.winbtns button { width: 69px; height: 46px; }

.tabs { display: flex; align-items: stretch; height: 36px; background: #217346; color: #fff; }
.tab { padding: 0 14px; }
.tab.file { width: 88px; margin-right: 6px; padding: 0; }
.tab.active { width: 76px; margin-right: 1px; padding: 0; background: #f0f0f0; color: #217346; }
.tell { display: flex; align-items: center; gap: 6px; margin-left: 24px; flex: 1; }
.tell input { width: 260px; }
.tell input::placeholder { color: #90b9a2; opacity: 1; }
.share { gap: 8px; width: 111px; height: 35px; padding-right: 20px; background: #0e5c2f; }
.signin { padding: 0 16px; }

.ribbon { display: flex; height: 132px; background: #f0f0f0; border-bottom: 1px solid #d2d2d2; }
.group { display: flex; flex-direction: column; flex: none; }
.group .body { display: flex; height: 106px; }
.group footer { display: flex; align-items: center; height: 25px; font-size: 15px; color: #666; }
.group .name { flex: 1; text-align: center; }
.launch { margin: 0 7px 0 5px; }
.divider { width: 1px; margin: 4px 0; background: #d4d4d4; flex: none; }
.g-clip { width: 111px; }
.g-font { width: 264px; }
.g-align { width: 393px; }
.g-num { width: 182px; }
.g-styles { width: 259px; }
.g-cells { width: 186px; }
.g-edit { width: 256px; }
.g-acro { width: 147px; }
.g-clip .body, .g-cells .body { padding-left: 4px; }
.g-styles .body { padding-left: 6px; }
.group .rows, .rows { display: flex; flex-direction: column; gap: 12px; padding-top: 15px; }
.g-font .rows, .g-num .rows { padding-left: 4px; }
.g-align .body { padding-left: 4px; }
.row { display: flex; align-items: center; height: 32px; flex: none; }
.sq { width: 30px; height: 31px; }
.sq.on { background: #c5c5c5; }
.sep { width: 1px; height: 22px; margin: 0 4px; background: #d4d4d4; flex: none; }
.tallsep { height: 74px; margin: 16px 6px 0; }
.big { flex-direction: column; justify-content: flex-start; }
.big .pic { display: flex; align-items: center; justify-content: center; height: 48px; margin: 8px 0 1px; }
.big .line2 { display: flex; align-items: center; justify-content: center; gap: 6px; height: 24px; }
.paste { width: 58px; }
.paste .pic { padding-left: 8px; }
.clipcol { display: flex; flex-direction: column; gap: 1px; padding-top: 4px; }
.pair { display: flex; align-items: center; margin-right: -4px; }
.ch { font-size: 21px; color: #505050; }
.bold { font-weight: 700; }
.ital { font-family: "Liberation Serif", serif; font-style: italic; font-weight: 700; font-size: 23px; }
.under { text-decoration: underline; font-weight: 600; text-decoration-thickness: 1px; }
.pct { font-size: 22px; }
.dec { flex-direction: column; align-items: flex-end; font-family: "Liberation Sans", sans-serif; font-size: 13px; line-height: 14px; padding-right: 4px; }
.dec span { display: flex; align-items: center; }
.combo { display: flex; align-items: center; height: 32px; padding: 1px 6px 0 2px; background: #fff; border: 1px solid #c3c3c3; }
.combo select { flex: 1; }
.face { width: 136px; }
.size { width: 61px; margin-left: -1px; }
.fmt { width: 174px; }
.wide { gap: 4px; justify-content: flex-start; }
.wide .far { margin-left: 8px; }
.cond { width: 100px; }
.fmtas { width: 87px; }
.cell { width: 60px; }
.cel { width: 59px; }
.editcol { display: flex; flex-direction: column; width: 126px; padding: 3px 0 0 8px; }
.mini { justify-content: flex-start; gap: 5px; height: 31px; }
.mini .push { margin-left: 5px; }
.sort { width: 68px; }
.find { width: 53px; }
.adobe { width: 147px; }
.collapse { align-self: flex-end; margin: 0 12px 6px auto; }

.formula { display: flex; align-items: center; height: 65px; padding: 0 7px; }
.namebox { display: flex; align-items: center; width: 152px; height: 35px; padding: 0 10px 0 6px; border: 1px solid #c3c3c3; background: #fdfdfd; }
.namebox input { flex: 1; font-size: 19px; }
.dots { margin: 0 21px 0 20px; }
.fxbox { display: flex; align-items: center; width: 164px; height: 35px; border: 1px solid #c3c3c3; background: #fdfdfd; }
.fxbox button { width: 54px; }
.fx { font-family: "Liberation Serif", serif; font-style: italic; font-weight: 700; font-size: 24px; color: #666; }
.fx small { font-size: 18px; }
.finput { display: flex; align-items: center; flex: 1; height: 35px; margin-left: 4px; padding: 0 7px; border: 1px solid #c3c3c3; background: #fdfdfd; }
.finput input { flex: 1; }

.work { display: flex; flex: 1; border-bottom: 1px solid #9b9b9b; }
.vscroll { display: flex; flex-direction: column; width: 25px; margin: 1px 2px 0; }
.vscroll button, .hscroll button { width: 25px; height: 25px; background: #fdfdfd; border: 1px solid #c3c3c3; }
.vthumb { flex: 528; background: #fff; border: 1px solid #ababab; }
.vtrack { flex: 94; background: #dadada; }
.arrow { width: 10px; height: 7px; background: #666; }
.arrow.up { clip-path: polygon(50% 0, 100% 100%, 0 100%); }
.arrow.down { clip-path: polygon(0 0, 100% 0, 50% 100%); }
.arrow.left, .arrow.right { width: 7px; height: 12px; }
.arrow.left { clip-path: polygon(0 50%, 100% 0, 100% 100%); }
.arrow.right { clip-path: polygon(100% 50%, 0 0, 0 100%); }
.arrow.pale { width: 5px; height: 10px; background: #bcbcbc; }

.gridwrap { flex: 1; min-width: 0; }
.grid { width: 100%; table-layout: fixed; border-collapse: separate; border-spacing: 0; color: #000; font-size: 20px; line-height: 31px; }
.grid th { padding: 0; font-weight: 400; font-size: 21px; line-height: 29px; background: #e6e6e6; }
.grid thead th { height: 33px; padding: 2px 0 0 2px; border-bottom: 1px solid #9b9b9b; background: linear-gradient(#d0d0d0, #9b9b9b) left / 1px 100% no-repeat #e6e6e6; }
.grid thead th:last-child { padding: 2px 7px 0 0; background: #e6e6e6; }
.grid thead th.sel { background-color: #d2d2d2; color: #217346; border-bottom: 2px solid #217346; }
.grid thead .corner svg { margin: 2px 23px 0 0; }
.grid tbody tr { height: 33px; }
.grid tbody tr.tall { height: 107px; }
.grid tbody tr.last { height: 3px; }
.grid .rh { border-left: 1px solid #9b9b9b; border-bottom: 1px solid #ababab; vertical-align: bottom; }
.grid .last .rh { border-bottom: 0; }
.grid td { padding: 0 4px; background: #fff; text-align: right; vertical-align: middle; white-space: nowrap; }
.grid tbody td:last-child { border-left: 1px solid #9b9b9b; }
.grid td.box { border-bottom: 1px solid #000; border-left: 1px solid #000; }
.grid td.edge { border-left: 1px solid #000; }
.above td:nth-child(5), .above td:nth-child(6) { border-bottom: 1px solid #000; }
.head td { font-weight: 700; }
.head td.box { background: #f2f2f2; }
.grid .tall td { white-space: normal; line-height: 33px; }
.grid td.num { padding: 0; font-size: 23px; }
.num .val { padding-right: 5px; }
.flag { background: linear-gradient(45deg, transparent 50%, #0a7d1c 50%) right top / 7px 7px no-repeat; }

.sheetbar { display: flex; align-items: center; height: 33px; padding-bottom: 1px; }
.hscroll { display: flex; width: 723px; height: 25px; margin-left: 29px; }
.htrack { width: 75px; background: #dadada; }
.hthumb { flex: 1; background: #fff; border: 1px solid #ababab; }
.sheetbar .dots { margin-left: 16px; margin-right: auto; }
.sheets { display: flex; align-items: center; height: 32px; padding-right: 16px; font-size: 19px; }
.nav { width: 34px; height: 30px; }
.sheet { height: 26px; padding: 0 12px 2px; border-left: 1px solid #ababab; }
.sheet.current { align-self: flex-start; width: 170px; height: 32px; margin-right: 34px; padding: 0; background: #fff; border: 1px solid #ababab; border-top: 0; border-bottom: 3px solid #217346; color: #217346; font-weight: 700; margin-top: -1px; }
.s0 { width: 53px; }
.s1 { width: 74px; }
.s2 { width: 117px; }
.s3 { width: 154px; }
.add { margin-right: 40px; }

.status { display: flex; align-items: center; height: 33px; padding: 0 9px 1px 7px; background: #f0f0f0; border-top: 1px solid #c0c0c0; font-size: 15px; color: #505050; }
.macro { margin-left: 22px; }
.views { display: flex; align-self: stretch; margin-left: auto; margin-right: 2px; }
.views button { width: 45px; }
.views .on { background: #c6c6c6; }
.zb { width: 20px; height: 20px; }
.zoom { width: 151px; height: 18px; background: linear-gradient(#ababab, #ababab) center / 100% 1px no-repeat; }
.zoom::-webkit-slider-thumb { appearance: none; width: 6px; height: 16px; background: #666; }
.pc { width: 40px; margin-left: 14px; text-align: right; }

.taskbar { display: flex; align-items: stretch; height: 60px; padding-left: 1px; background: linear-gradient(90deg, #2c2a26, #3b3935 25%, #35332f 60%, #2f2d29); color: #fff; font-size: 17px; }
.app { position: relative; width: 73px; margin-right: 2px; }
.app.open::after { content: ""; position: absolute; left: 7px; right: 5px; bottom: 0; height: 3px; background: #76b9ed; }
.app.multi::after { background: linear-gradient(90deg, #76b9ed 46px, #5a8db5 46px); }
.app.active { background: #5a5855; }
.app.active::after { left: 0; right: 0; }
.ps { display: flex; align-items: center; justify-content: center; width: 34px; height: 32px; margin-bottom: 4px; border: 2px solid #00c8ff; background: #001d26; color: #00c8ff; font-size: 18px; }
.tray { display: flex; margin-left: auto; }
.tray button { width: 36px; }
.lang, .clock { flex-direction: column; padding-top: 2px; }
.lang span, .clock span { height: 28px; line-height: 28px; }
.lang { width: 54px; }
.clock { width: 116px; }
.notes { position: relative; width: 60px; padding: 0 0 8px 0; }
.badge { position: absolute; left: 28px; top: 29px; width: 25px; height: 25px; border-radius: 50%; background: #45433f; border: 1px solid #999; font-size: 15px; line-height: 23px; font-weight: 600; }
.peek { width: 1px; margin: 0 6px 0 12px; background: #888; }
</style>
